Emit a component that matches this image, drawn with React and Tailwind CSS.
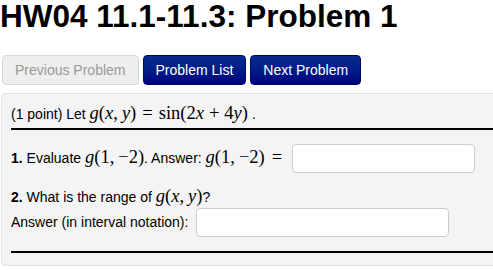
import React from 'react';

const M = ({ children, className = '' }) => (
    <span className={`font-['Liberation_Serif',serif] text-[18.5px] ${className}`}>{children}</span>
);

const I = ({ children }) => <i className="italic">{children}</i>;

const Func = ({ a, b }) => (
    <M>
        <I>g</I>(<span>{a}</span>,<span className="ml-[4px]">{b}</span>)
    </M>
);

const App = () => {
    return (
        <div className="w-[493px] h-[270px] overflow-hidden bg-white text-black font-['Liberation_Sans',Arial,sans-serif]">
            <h1 className="pt-[1px] text-[31.5px] leading-[30px] font-bold">HW04 11.1-11.3: Problem 1</h1>

            <div className="mt-[24px] pl-[2px] flex gap-[4px] text-[14px]">
                <button className="h-[30px] px-[12px] rounded-[4px] border border-[#d6d6d6] bg-[#eeeeee] text-[#9a9a9a]">
                    Previous Problem
                </button>
                <button className="h-[30px] px-[12px] rounded-[4px] border border-[#00066e] bg-gradient-to-b from-[#0a2c8c] to-[#000080] text-white">
                    Problem List
                </button>
                <button className="h-[30px] px-[12px] rounded-[4px] border border-[#00066e] bg-gradient-to-b from-[#0a2c8c] to-[#000080] text-white">
                    Next Problem
                </button>
            </div>

            <div className="mt-[8px] ml-[1px] w-[520px] rounded-[4px] border border-[#e3e3e3] bg-[#f4f4f4] pt-[10px] pl-[9px] pb-[12px] text-[14px]">
                <div className="h-[20px] flex items-center whitespace-pre">
                    <span>(1 point) Let </span>
                    <M>
                        <I>g</I>(<I>x</I>,<I><span className="ml-[4px]">y</span></I>)
                        <span className="mx-[6px]">=</span>
                        sin(2<I>x</I>
                        <span className="mx-[5px]">+</span>
                        4<I>y</I>)
                    </M>
                    <span> .</span>
                </div>
                <div className="mt-[4px] h-[2px] bg-black" />

                <div className="mt-[13px] h-[30px] flex items-center whitespace-pre">
                    <span className="font-bold">1.</span>
                    <span> Evaluate </span>
                    <Func a="1" b="−2" />
                    <span>. Answer: </span>
                    <Func a="1" b="−2" />
                    <M className="ml-[7px]">=</M>
                    <input className="ml-[10px] w-[183px] h-[29px] rounded-[4px] border border-[#cccccc] bg-white" />
                </div>

                <div className="mt-[14px] h-[20px] flex items-center whitespace-pre">
                    <span className="font-bold">2.</span>
                    <span> What is the range of </span>
                    <M>
                        <I>g</I>(<I>x</I>,<I><span className="ml-[4px]">y</span></I>)
                    </M>
                    <span>?</span>
                </div>
                <div className="h-[30px] flex items-center whitespace-pre">
                    <span>Answer (in interval notation): </span>
                    <input className="ml-[4px] w-[253px] h-[29px] rounded-[4px] border border-[#cccccc] bg-white" />
                </div>

                <div className="mt-[14px] h-[2px] bg-black" />
            </div>
        </div>
    );
};

export default App;
